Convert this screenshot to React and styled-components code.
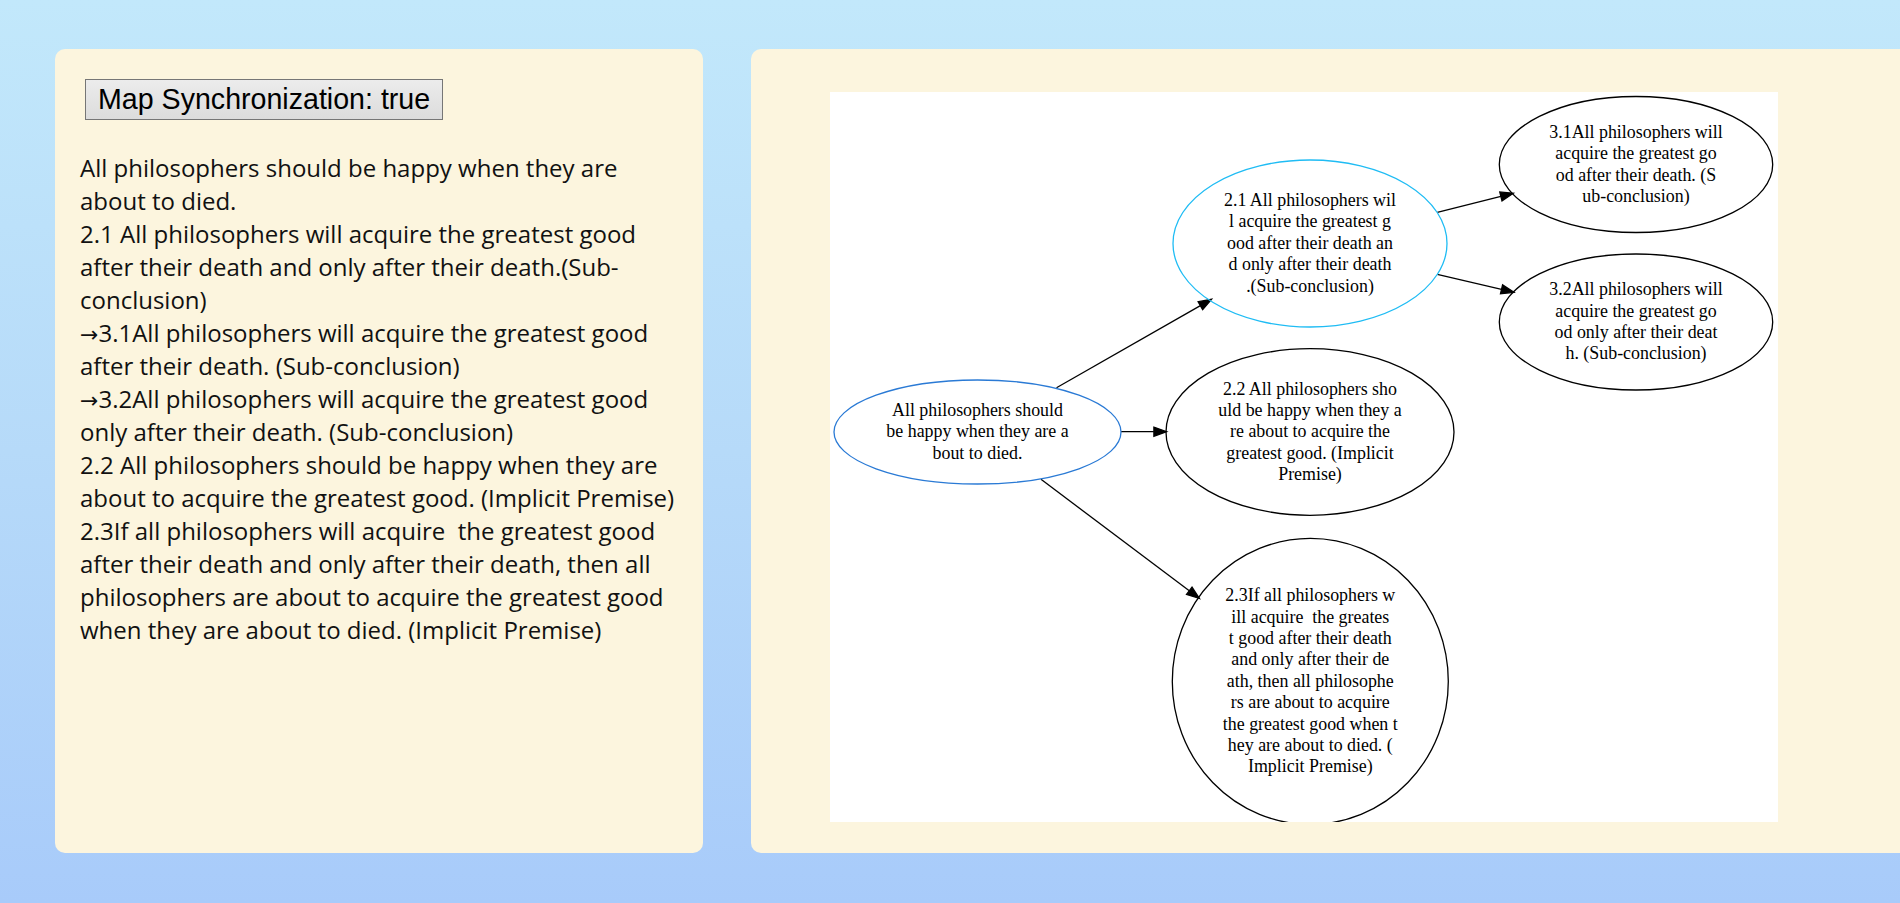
import React from 'react'
import styled, { createGlobalStyle } from 'styled-components'

const GlobalStyle = createGlobalStyle`
  html, body {
    margin: 0;
    padding: 0;
    overflow: hidden;
  }
  body {
    min-height: 903px;
    background: linear-gradient(to bottom, #c2e8fb 0%, #b6daf9 50%, #a8cbfa 100%);
    font-family: "Open Sans", "Noto Sans", sans-serif;
  }
`

// arrow: true puts a → in front of the sub-claim
const argument = [
  { text: 'All philosophers should be happy when they are about to died.' },
  { text: '2.1 All philosophers will acquire the greatest good after their death and only after their death.(Sub-conclusion)' },
  { text: '3.1All philosophers will acquire the greatest good after their death. (Sub-conclusion)', arrow: true },
  { text: '3.2All philosophers will acquire the greatest good only after their death. (Sub-conclusion)', arrow: true },
  { text: '2.2 All philosophers should be happy when they are about to acquire the greatest good. (Implicit Premise)' },
  { text: '2.3If all philosophers will acquire  the greatest good after their death and only after their death, then all philosophers are about to acquire the greatest good when they are about to died. (Implicit Premise)' }
]

// node positions are in the graph box's own pixels
const nodes = [
  { id: 'a', cx: 147.5, cy: 340, rx: 143.5, ry: 52, color: '#2a7ad5',
    lines: ['All philosophers should', 'be happy when they are a', 'bout to died.'] },
  { id: 'n21', cx: 480, cy: 151.5, rx: 137, ry: 83.5, color: '#1fbcf4',
    lines: ['2.1 All philosophers wil', 'l acquire the greatest g', 'ood after their death an', 'd only after their death', '.(Sub-conclusion)'] },
  { id: 'n22', cx: 480, cy: 340, rx: 144, ry: 83.3, color: '#000',
    lines: ['2.2 All philosophers sho', 'uld be happy when they a', 're about to acquire the', 'greatest good. (Implicit', 'Premise)'] },
  { id: 'n23', cx: 480.3, cy: 589.4, rx: 138, ry: 143, color: '#000',
    lines: ['2.3If all philosophers w', 'ill acquire  the greates', 't good after their death', 'and only after their de', 'ath, then all philosophe', 'rs are about to acquire', 'the greatest good when t', 'hey are about to died. (', 'Implicit Premise)'] },
  { id: 'n31', cx: 806, cy: 72.5, rx: 136.7, ry: 68, color: '#000',
    lines: ['3.1All philosophers will', 'acquire the greatest go', 'od after their death. (S', 'ub-conclusion)'] },
  { id: 'n32', cx: 806, cy: 230, rx: 136.7, ry: 68, color: '#000',
    lines: ['3.2All philosophers will', 'acquire the greatest go', 'od only after their deat', 'h. (Sub-conclusion)'] }
]

const edges = [
  [226.5, 295.7, 381.5, 207.3],
  [291, 339.7, 336.7, 339.7],
  [211, 387.3, 369.5, 506.5],
  [607.3, 120.3, 683.3, 101.3],
  [607.3, 182.3, 684, 200.3]
]

const arrowHead = (x1, y1, x2, y2) => {
  const len = Math.hypot(x2 - x1, y2 - y1)
  const ux = (x2 - x1) / len, uy = (y2 - y1) / len
  const bx = x2 - ux * 12.8, by = y2 - uy * 12.8
  const px = -uy * 4.6, py = ux * 4.6
  return {
    line: [x1, y1, bx, by],
    points: `${x2},${y2} ${bx + px},${by + py} ${bx - px},${by - py}`
  }
}

export default function App() {
  return (
    <>
      <GlobalStyle />
      <Page>
        <ArgumentPanel>
          <SyncButton>Map Synchronization: true</SyncButton>
          <ArgumentText>
            {argument.map((c, i) => (
              <Claim key={i}>
                {c.arrow && <Arrow>{'\u2192'}</Arrow>}
                {c.text}
              </Claim>
            ))}
          </ArgumentText>
        </ArgumentPanel>
        <MapPanel>
          <GraphBox>
            <svg width="948" height="730" viewBox="0 0 948 730">
              {edges.map((e, i) => {
                const a = arrowHead(...e)
                return (
                  <g key={i}>
                    <line x1={a.line[0]} y1={a.line[1]} x2={a.line[2]} y2={a.line[3]} stroke="#000" strokeWidth="1.3" />
                    <polygon points={a.points} fill="#000" stroke="#000" strokeWidth="1.3" />
                  </g>
                )
              })}
              {nodes.map(n => (
                <g key={n.id}>
                  <ellipse cx={n.cx} cy={n.cy} rx={n.rx} ry={n.ry} fill="none" stroke={n.color} strokeWidth="1.3" />
                  {n.lines.map((l, i) => (
                    <NodeLabel
                      key={i}
                      x={n.cx}
                      y={n.cy + 5.3 + (i - (n.lines.length - 1) / 2) * 21.4}
                    >
                      {l}
                    </NodeLabel>
                  ))}
                </g>
              ))}
            </svg>
          </GraphBox>
        </MapPanel>
      </Page>
    </>
  )
}

const Page = styled.div`
  display: flex;
  gap: 48px;
  padding: 49px 0 0 55px;
  height: 804px;
  width: 2100px;
`
const ArgumentPanel = styled.div`
  flex: none;
  box-sizing: border-box;
  width: 648px;
  height: 804px;
  padding: 30px 25px 25px 25px;
  background: #fcf5de;
  border-radius: 10px;
`
const SyncButton = styled.button`
  display: block;
  box-sizing: border-box;
  height: 41px;
  margin-left: 5px;
  padding: 0 12px;
  font-family: "Liberation Sans", Arial, sans-serif;
  font-size: 28.6px;
  color: #000;
  background: linear-gradient(to bottom, #ececec, #dcdcdc);
  border: 1px solid #767676;
  border-radius: 0;
`
const ArgumentText = styled.div`
  margin-top: 31px;
  font-family: "Open Sans", sans-serif;
  font-size: 24px;
  line-height: normal;
  color: #111;
  white-space: pre-wrap;
`
const Claim = styled.div``
const Arrow = styled.span`
  display: inline-block;
  font-family: "DejaVu Sans", sans-serif;
  font-size: 22px;
  line-height: 1;
`
const MapPanel = styled.div`
  flex: none;
  box-sizing: border-box;
  width: 1200px;
  height: 804px;
  padding: 43px 0 0 79px;
  background: #fcf5de;
  border-radius: 10px;
`
const GraphBox = styled.div`
  width: 948px;
  height: 730px;
  background: #fff;
  overflow: hidden;
  svg {
    display: block;
  }
`
const NodeLabel = styled.text`
  font-family: "Liberation Serif", "Times New Roman", serif;
  font-size: 17.9px;
  text-anchor: middle;
  white-space: pre;
  fill: #000;
`
